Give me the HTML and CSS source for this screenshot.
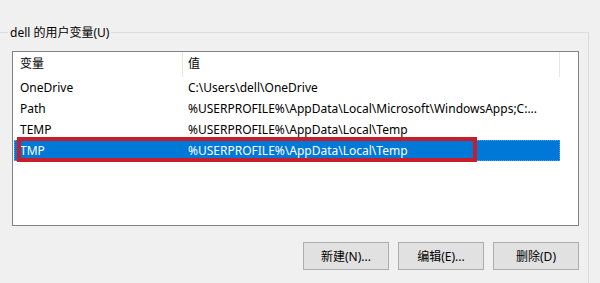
FILE: index.html
```html
<!DOCTYPE html>
<html lang="zh-CN">
<head>
    <meta charset="UTF-8">
    <title>环境变量</title>
    <link rel="stylesheet" href="styles.css">
</head>
<body>
    <fieldset class="group">
        <legend>dell 的用户变量(U)</legend>
        <div class="list">
            <div class="row head">
                <div class="col name">变量</div>
                <div class="col value">值</div>
            </div>
            <div class="row">
                <div class="col name">OneDrive</div>
                <div class="col value">C:\Users\dell\OneDrive</div>
            </div>
            <div class="row">
                <div class="col name">Path</div>
                <div class="col value">%USERPROFILE%\AppData\Local\Microsoft\WindowsApps;C:...</div>
            </div>
            <div class="row">
                <div class="col name">TEMP</div>
                <div class="col value">%USERPROFILE%\AppData\Local\Temp</div>
            </div>
            <div class="row selected">
                <div class="col name">TMP</div>
                <div class="col value">%USERPROFILE%\AppData\Local\Temp</div>
                <div class="mark"></div>
            </div>
        </div>
        <div class="buttons">
            <button type="button">新建(N)...</button>
            <button type="button">编辑(E)...</button>
            <button type="button">删除(D)</button>
        </div>
    </fieldset>
</body>
</html>
```

FILE: styles.css
```css
body {
    margin: 0;
    background-color: #f0f0f0;
    font-family: "Noto Sans", "Noto Sans CJK SC", sans-serif;
    font-size: 12px;
    color: #000;
    overflow: hidden;
}
.group {
    margin: 24px 0 0 -2px;
    padding: 0 0 20px 10px;
    width: 580px;
    border: 1px solid #dcdcdc;
    border-left: none;
    border-bottom: none;
}
.group legend {
    padding: 0 2px;
    line-height: 17px;
}
.list {
    margin: 10px 0 0 4px;
    width: 565px;
    height: 173px;
    background-color: #fff;
    border: 1px solid #828282;
}
.row {
    position: relative;
    display: flex;
    height: 21px;
    line-height: 21px;
    width: 546px;
    margin-left: 1px;
    white-space: nowrap;
}
.row.head {
    height: 25px;
    line-height: 23px;
}
.row.head .col {
    border-right: 1px solid #e5e5e5;
}
.col.name {
    width: 169px;
    padding-left: 6px;
    box-sizing: border-box;
}
.col.value {
    flex: 1;
    padding-left: 5px;
    overflow: hidden;
}
.row.selected {
    background-color: #0078d7;
    color: #fff;
    outline: 1px dotted #5a9fe0;
    outline-offset: -1px;
}
.mark {
    position: absolute;
    left: 3px;
    top: -3px;
    width: 452px;
    height: 17px;
    border: 4px solid #c81e2c;
}
.buttons {
    display: flex;
    justify-content: flex-end;
    gap: 9px;
    width: 567px;
    margin: 16px 0 0 4px;
}
.buttons button {
    width: 86px;
    height: 28px;
    background-color: #e1e1e1;
    border: 1px solid #adadad;
    font-family: inherit;
    font-size: 12px;
    color: #000;
    padding: 0;
}
```
